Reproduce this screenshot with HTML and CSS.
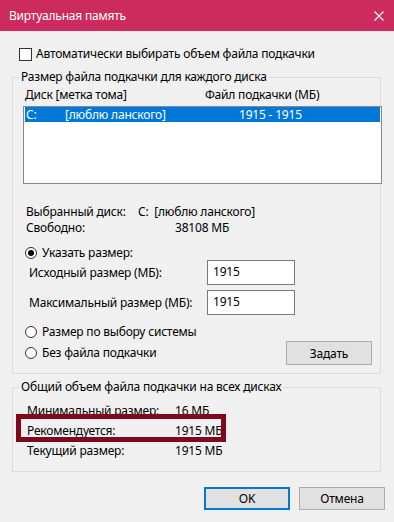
FILE: index.html
```html
<!DOCTYPE html>
<html lang="ru">
<head>
  <meta charset="UTF-8">
  <meta name="viewport" content="width=device-width, initial-scale=1.0">
  <title>Виртуальная память</title>
  <link rel="stylesheet" href="styles.css">
</head>
<body>
  <div class="titlebar">
    <span class="title">Виртуальная память</span>
    <svg class="close" width="10" height="10" viewBox="0 0 10 10">
      <path d="M0.5 0.5 L9.5 9.5 M9.5 0.5 L0.5 9.5" stroke="#fff" stroke-width="1.1" fill="none"/>
    </svg>
  </div>

  <div class="dialog">
    <label class="check-row">
      <span class="checkbox"></span>
      <span>Автоматически выбирать объем файла подкачки</span>
    </label>

    <fieldset class="group group-drives">
      <legend>Размер файла подкачки для каждого диска</legend>
      <div class="list-head">
        <span class="col-disk">Диск [метка тома]</span>
        <span>Файл подкачки (МБ)</span>
      </div>
      <div class="listbox">
        <div class="list-row selected">
          <span class="col-letter">C:</span>
          <span class="col-label">[люблю ланского]</span>
          <span>1915 - 1915</span>
        </div>
      </div>

      <div class="info">
        <div class="info-row"><span class="info-label">Выбранный диск:</span><span>C:&nbsp; [люблю ланского]</span></div>
        <div class="info-row"><span class="info-label">Свободно:</span><span class="free">38108 МБ</span></div>
      </div>

      <div class="radio-row first">
        <span class="radio checked"></span>
        <span>Указать размер:</span>
      </div>
      <div class="field-row">
        <span class="field-label">Исходный размер (МБ):</span>
        <span class="textbox">1915</span>
      </div>
      <div class="field-row second">
        <span class="field-label">Максимальный размер (МБ):</span>
        <span class="textbox">1915</span>
      </div>
      <div class="radio-row">
        <span class="radio"></span>
        <span>Размер по выбору системы</span>
      </div>
      <div class="last-row">
        <div class="radio-row inline">
          <span class="radio"></span>
          <span>Без файла подкачки</span>
        </div>
        <button class="btn btn-set">Задать</button>
      </div>
    </fieldset>

    <fieldset class="group group-total">
      <legend>Общий объем файла подкачки на всех дисках</legend>
      <div class="total-row"><span class="total-label">Минимальный размер:</span><span>16 МБ</span></div>
      <div class="total-row marked"><span class="total-label">Рекомендуется:</span><span>1915 МБ</span></div>
      <div class="total-row"><span class="total-label">Текущий размер:</span><span>1915 МБ</span></div>
    </fieldset>

    <div class="buttons">
      <button class="btn btn-default">OK</button>
      <button class="btn">Отмена</button>
    </div>
  </div>
</body>
</html>
```

FILE: styles.css
```css
*, *::before, *::after {
  box-sizing: border-box;
}

body {
  margin: 0;
  width: 394px;
  height: 522px;
  overflow: hidden;
  background-color: #f0f0f0;
  font-family: "Noto Sans", "Open Sans", sans-serif;
  font-size: 12px;
  letter-spacing: -0.2px;
  color: #000;
}

.titlebar {
  height: 31px;
  background-color: #cd2a5e;
  color: #fff;
  display: flex;
  align-items: center;
  justify-content: space-between;
  padding: 0 10px 0 9px;
}

.title {
  line-height: 16px;
  margin-top: 1px;
}

.close {
  display: block;
  margin-top: 1px;
}

.dialog {
  padding: 0 13px 0 12px;
}

.check-row {
  display: flex;
  align-items: center;
  height: 16px;
  line-height: 16px;
  margin-top: 15px;
  padding-left: 7px;
}

.checkbox {
  width: 13px;
  height: 13px;
  border: 1px solid #333;
  background-color: #fff;
  margin-right: 4px;
}

.group {
  margin: 7px 0 0;
  padding: 0 0 8px;
  border: 1px solid #dcdcdc;
  min-inline-size: 0;
}

.group legend {
  margin-left: 6px;
  padding: 0 2px;
  line-height: 16px;
}

.list-head {
  display: flex;
  line-height: 16px;
  margin-top: 2px;
  padding-left: 12px;
}

.col-disk {
  width: 180px;
}

.listbox {
  margin: 3px -2px 0 10px;
  height: 78px;
  border: 1px solid #828790;
  background-color: #fff;
  padding: 0 1px;
}

.list-row {
  display: flex;
  height: 15px;
  line-height: 15px;
  padding-left: 1px;
}

.list-row.selected {
  background-color: #0078d7;
  color: #fff;
}

.col-letter {
  width: 39px;
}

.col-label {
  width: 174px;
}

.info {
  margin-top: 20px;
  padding-left: 13px;
}

.info-row {
  display: flex;
  line-height: 16px;
}

.info-label {
  width: 112px;
}

.free {
  margin-left: 37px;
}

.radio-row {
  display: flex;
  align-items: center;
  height: 16px;
  line-height: 16px;
  margin-top: 9px;
  padding-left: 12px;
}

.radio-row.first {
  margin-bottom: -1px;
}

.radio {
  width: 12px;
  height: 12px;
  border: 1px solid #333;
  border-radius: 50%;
  background-color: #fff;
  margin-right: 5px;
  position: relative;
}

.radio.checked::after {
  content: "";
  position: absolute;
  left: 2px;
  top: 2px;
  width: 6px;
  height: 6px;
  border-radius: 50%;
  background-color: #000;
}

.field-row {
  display: flex;
  align-items: center;
  height: 25px;
  padding-left: 16px;
}

.field-row.second {
  margin-top: 5px;
}

.field-label {
  width: 178px;
}

.textbox {
  width: 88px;
  height: 25px;
  border: 1px solid #7a7a7a;
  background-color: #fff;
  padding: 3px 0 0 5px;
  line-height: 16px;
}

.last-row {
  display: flex;
  align-items: center;
  justify-content: space-between;
  margin-top: 1px;
  padding-right: 8px;
}

.radio-row.inline {
  margin-top: 0;
}

.btn {
  font-family: inherit;
  font-size: 12px;
  letter-spacing: inherit;
  color: #000;
  width: 86px;
  height: 23px;
  background-color: #e1e1e1;
  border: 1px solid #adadad;
  padding: 0;
}

.btn-set {
  height: 24px;
}

.btn-default {
  border: 2px solid #0078d7;
}

.group-total {
  margin-top: 5px;
  padding-bottom: 10px;
}

.total-row {
  display: flex;
  line-height: 20px;
  padding-left: 14px;
}

.total-row:first-of-type {
  margin-top: 6px;
}

.total-label {
  width: 148px;
}

.total-row.marked {
  position: relative;
}

.total-row.marked::after {
  content: "";
  position: absolute;
  left: 3px;
  top: -7px;
  width: 210px;
  height: 28px;
  border: 5px solid #7d0a1f;
}

.buttons {
  display: flex;
  justify-content: flex-end;
  gap: 9px;
  margin: 15px -4px 0 0;
}
```
